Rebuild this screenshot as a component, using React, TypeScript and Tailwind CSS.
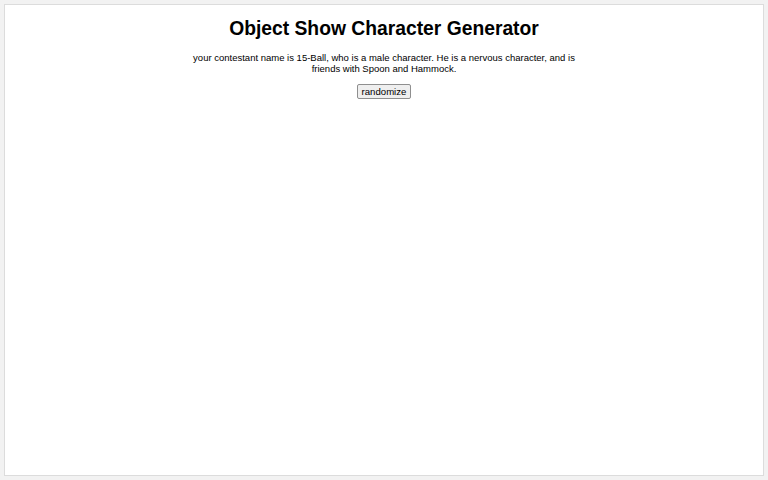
export default function App() {
  return (
    <div className="h-[480px] w-[768px] bg-[#f2f2f2] p-[4px] font-['Liberation_Sans',Arial,sans-serif] text-black">
      <div className="flex h-full flex-col items-center border border-[#dcdcdc] bg-white">
        <h1 className="mt-[13px] text-[19.3px] font-bold leading-[22px]">Object Show Character Generator</h1>
        <p className="mt-[12px] w-[392px] text-center text-[9.5px] leading-[11px]">
          your contestant name is 15-Ball, who is a male character. He is a nervous character, and is friends with Spoon and Hammock.
        </p>
        <button className="mt-[10px] rounded-[2px] border border-[#8f8f8f] bg-[#efefef] px-[4px] text-[9.6px] leading-[13px]">
          randomize
        </button>
      </div>
    </div>
  );
}
